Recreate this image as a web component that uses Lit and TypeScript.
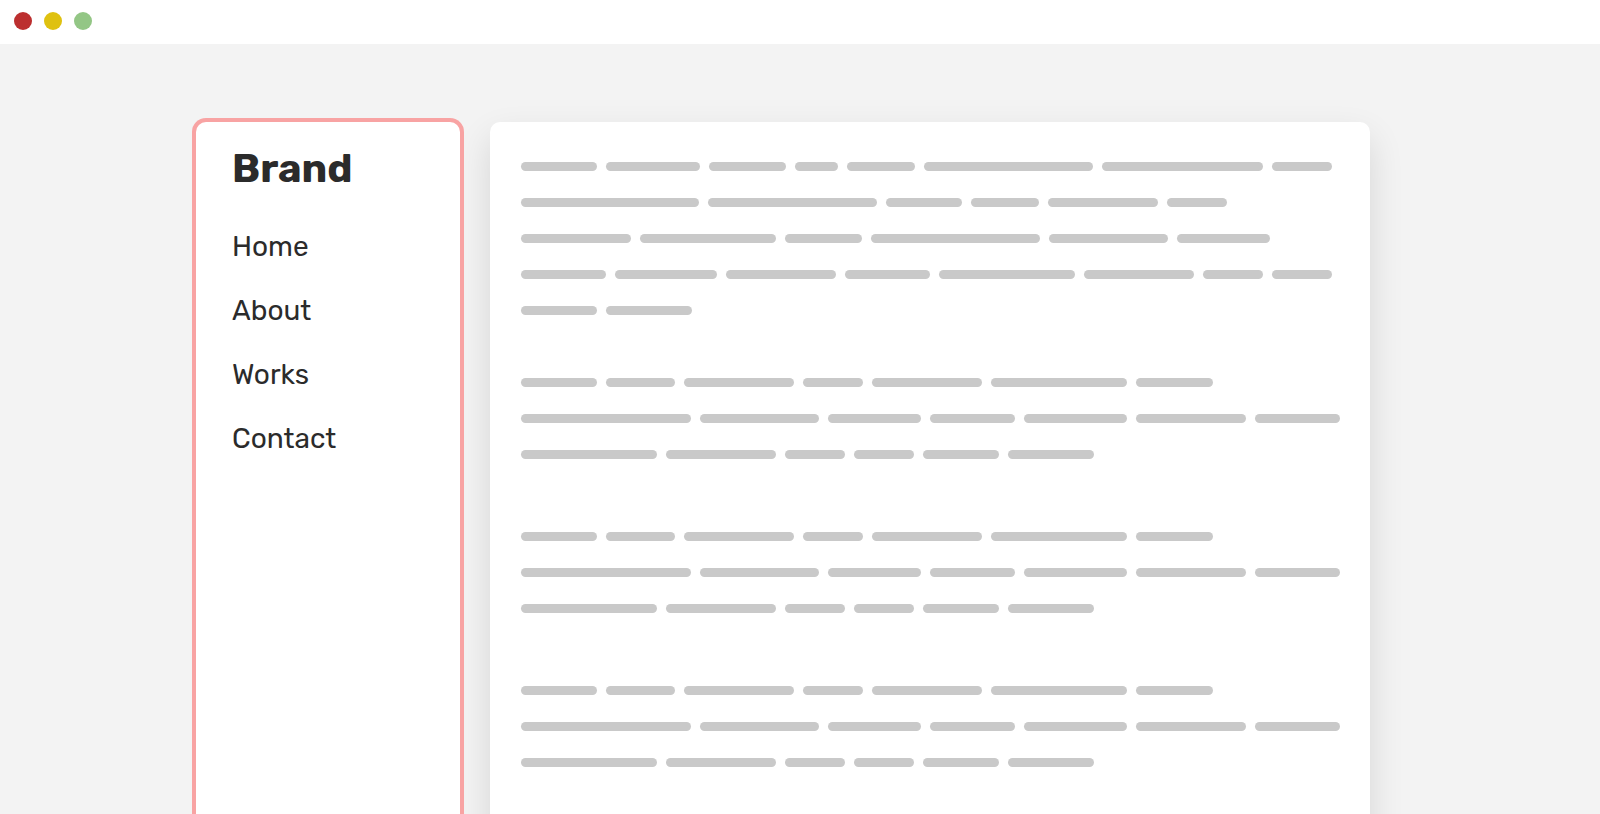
import { LitElement, html, css } from "lit";
import { customElement } from "lit/decorators.js";
import { styleMap } from "lit/directives/style-map.js";

const links = ["Home", "About", "Works", "Contact"];

const intro = [
  [76, 94, 77, 43, 68, 169, 161, 60],
  [178, 169, 76, 68, 110, 60],
  [110, 136, 77, 169, 119, 93],
  [85, 102, 110, 85, 136, 110, 60, 60],
  [76, 86],
];

const passage = [
  [76, 69, 110, 60, 110, 136, 77],
  [170, 119, 93, 85, 103, 110, 85],
  [136, 110, 60, 60, 76, 86],
];

/* Placeholder paragraph: each number is the width of one word. */
@customElement("skeleton-text")
export class SkeletonText extends LitElement {
  static properties = { rows: { attribute: false } };

  declare rows: number[][];

  static styles = css`
    :host {
      display: flex;
      flex-direction: column;
      gap: 27px;
    }
    .row {
      display: flex;
      flex-wrap: wrap;
      gap: 9px;
    }
    .word {
      height: 9px;
      border-radius: 5px;
      background: #c9c9c9;
    }
  `;

  render() {
    return this.rows.map(
      (row) => html`<div class="row">
        ${row.map((w) => html`<span class="word" style=${styleMap({ width: `${w}px` })}></span>`)}
      </div>`
    );
  }
}

@customElement("app-root")
export class AppRoot extends LitElement {
  static styles = css`
    :host {
      display: flex;
      flex-direction: column;
      height: 100vh;
      overflow: hidden;
      background: #f3f3f3;
      color: #2b2b2b;
      font-family: Rubik, Roboto, sans-serif;
    }
    .titlebar {
      display: flex;
      flex: none;
      gap: 12px;
      padding: 12px 14px 14px;
      background: #fff;
    }
    .dot {
      width: 18px;
      height: 18px;
      border-radius: 50%;
    }
    .close {
      background: #bc2f2f;
    }
    .minimize {
      background: #dfc110;
    }
    .expand {
      background: #93c685;
    }
    .page {
      display: grid;
      flex: 1 0 auto;
      grid-template-columns: 264px minmax(0, 880px);
      gap: 30px;
      justify-content: center;
      padding: 78px 34px 0 0;
    }
    .sidebar {
      padding: 24px 36px;
      border-radius: 10px;
      background: #fff;
      box-shadow: 0 0 0 4px #f8a3a3;
      z-index: 0;
    }
    .brand {
      margin: 0 0 37px;
      font-size: 40px;
      font-weight: 700;
      line-height: 46px;
    }
    .links {
      display: flex;
      flex-direction: column;
      gap: 28px;
      margin: 0;
      padding: 0;
      list-style: none;
    }
    .link {
      display: block;
      color: inherit;
      font-size: 28px;
      line-height: 36px;
      text-decoration: none;
    }
    .content {
      display: flex;
      flex-direction: column;
      gap: 73px;
      padding: 40px 28px 100px 31px;
      border-radius: 10px;
      background: #fff;
      box-shadow: 0 15px 35px rgba(0, 0, 0, 0.12);
    }
    .lead {
      display: flex;
      flex-direction: column;
      gap: 63px;
    }
  `;

  render() {
    return html`
      <header class="titlebar">
        <span class="dot close"></span>
        <span class="dot minimize"></span>
        <span class="dot expand"></span>
      </header>
      <div class="page">
        <nav class="sidebar">
          <h1 class="brand">Brand</h1>
          <ul class="links">
            ${links.map((name) => html`<li><a class="link" href="#${name.toLowerCase()}">${name}</a></li>`)}
          </ul>
        </nav>
        <main class="content">
          <div class="lead">
            <skeleton-text .rows=${intro}></skeleton-text>
            <skeleton-text .rows=${passage}></skeleton-text>
          </div>
          <skeleton-text .rows=${passage}></skeleton-text>
          <skeleton-text .rows=${passage}></skeleton-text>
        </main>
      </div>
    `;
  }
}
